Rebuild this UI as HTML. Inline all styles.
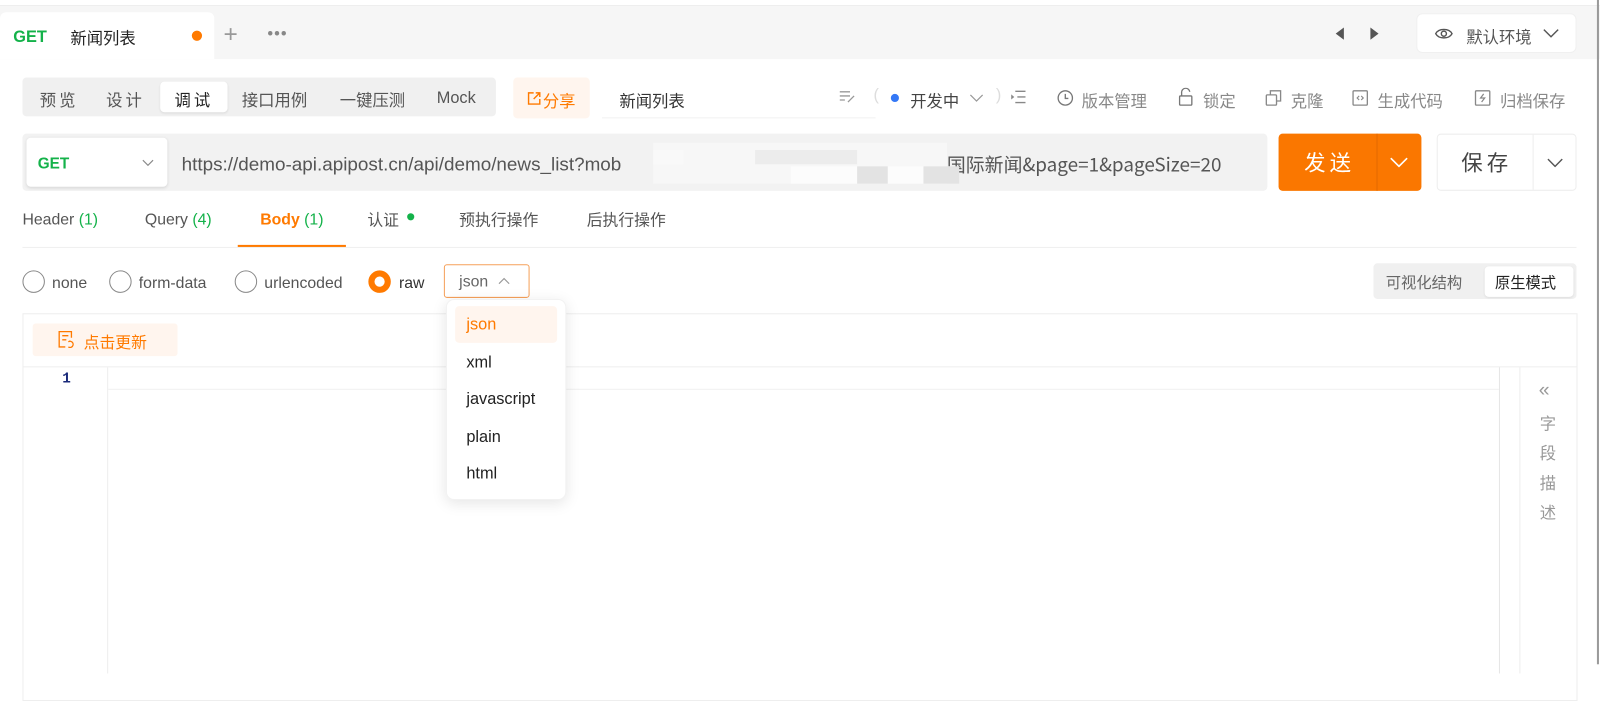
<!DOCTYPE html>
<html><head><meta charset="utf-8">
<style>
*{box-sizing:border-box;margin:0;padding:0}
html,body{width:1600px;height:664px;overflow:hidden;background:#fff}
body{font-family:"Liberation Sans","Noto Sans CJK SC",sans-serif;}
#w{position:absolute;left:0;top:0;width:1568px;height:651px;transform:scale(1.0204);transform-origin:0 0;color:#555}
.a{position:absolute;white-space:nowrap}
.cn{font-family:"Noto Sans CJK SC","Liberation Sans",sans-serif}
.ic{position:absolute}
</style></head><body>
<div id="w">
<!-- top bar -->
<div class="a" style="left:0;top:5px;width:1568px;height:1px;background:#ececec"></div>
<div class="a" style="left:0;top:6px;width:1568px;height:52px;background:#f6f6f6"></div>
<div class="a" style="left:0;top:12px;width:210px;height:46px;background:#fff;border-radius:6px 6px 0 0"></div>
<div class="a" style="left:13px;top:28px;font-size:16px;font-weight:bold;color:#14b24a">GET</div>
<div class="a cn" style="left:69px;top:24px;font-size:16px;color:#222">新闻列表</div>
<div class="a" style="left:188px;top:30px;width:10px;height:10px;border-radius:50%;background:#ff7a00"></div>
<div class="a" style="left:219px;top:20px;font-size:24px;color:#999;font-weight:300">+</div>
<div class="a" style="left:262px;top:25px;font-size:16px;color:#888;letter-spacing:1px">•••</div>
<svg class="ic" style="left:1308px;top:27px" width="10" height="12"><path d="M9 0V12L1 6Z" fill="#555"/></svg>
<svg class="ic" style="left:1342px;top:27px" width="10" height="12"><path d="M1 0V12L9 6Z" fill="#555"/></svg>
<div class="a" style="left:1388px;top:13px;width:157px;height:39px;background:#fff;border-radius:6px;border:1px solid #f0f0f0"></div>
<svg class="ic" style="left:1406px;top:26px" width="18" height="14"><path d="M1 7C4 1.5 14 1.5 17 7C14 12.5 4 12.5 1 7Z" fill="none" stroke="#555" stroke-width="1.4"/><circle cx="9" cy="7" r="2.5" fill="none" stroke="#555" stroke-width="1.4"/></svg>
<div class="a cn" style="left:1437px;top:23px;font-size:16px;color:#555">默认环境</div>
<svg class="ic" style="left:1512px;top:28px" width="16" height="10"><path d="M1 1L8 8L15 1" fill="none" stroke="#555" stroke-width="1.4"/></svg>

<!-- row 2 -->
<div class="a" style="left:22px;top:76px;width:464px;height:38px;background:#f0f0f0;border-radius:4px"></div>
<div class="a" style="left:157px;top:80px;width:66px;height:30px;background:#fff;border-radius:4px;box-shadow:0 1px 2px rgba(0,0,0,.08)"></div>
<div class="a cn" style="top:85px;left:39px;font-size:16px;letter-spacing:3px">预览</div>
<div class="a cn" style="top:85px;left:104px;font-size:16px;letter-spacing:3px">设计</div>
<div class="a cn" style="top:85px;left:171px;font-size:16px;letter-spacing:3px;color:#222">调试</div>
<div class="a cn" style="top:85px;left:237px;font-size:16px">接口用例</div>
<div class="a cn" style="top:85px;left:333px;font-size:16px">一键压测</div>
<div class="a" style="top:88px;left:428px;font-size:16px">Mock</div>
<div class="a" style="left:503px;top:76px;width:75px;height:40px;background:#fff5ee;border-radius:4px"></div>
<svg class="ic" style="left:516px;top:89px" width="15" height="15"><path d="M7 2H2V13H13V8M9 2H13V6M13 2L7 8" fill="none" stroke="#ff7a00" stroke-width="1.4"/></svg>
<div class="a cn" style="left:532px;top:86px;font-size:16px;color:#ff7a00">分享</div>
<div class="a cn" style="left:607px;top:86px;font-size:16px;color:#333">新闻列表</div>
<div class="a" style="left:590px;top:115px;width:268px;height:1px;background:#f0f0f0"></div>
<svg class="ic" style="left:822px;top:88px" width="20" height="14"><path d="M1 2H11M1 6H11M1 10H6M9 12L15 6" stroke="#999" stroke-width="1.3" fill="none"/></svg>
<div class="a" style="left:856px;top:85px;font-size:16px;color:#ddd">(</div>
<div class="a" style="left:873px;top:92px;width:8px;height:8px;border-radius:50%;background:#3478f6"></div>
<div class="a cn" style="left:892px;top:86px;font-size:16px;color:#444">开发中</div>
<svg class="ic" style="left:950px;top:92px" width="14" height="8"><path d="M1 1L7 7L13 1" fill="none" stroke="#999" stroke-width="1.2"/></svg>
<div class="a" style="left:976px;top:85px;font-size:16px;color:#ddd">)</div>
<svg class="ic" style="left:990px;top:88px" width="16" height="14"><path d="M5 1.5H15M7 7H15M5 12.5H15" stroke="#888" stroke-width="1.3"/><path d="M1 4.5L4 7L1 9.5Z" fill="#888"/></svg>
<svg class="ic" style="left:1036px;top:88px" width="16" height="16"><circle cx="8" cy="8" r="7" fill="none" stroke="#777" stroke-width="1.3"/><path d="M8 4V8.5H11" fill="none" stroke="#777" stroke-width="1.3"/></svg>
<div class="a cn" style="left:1060px;top:86px;font-size:16px;color:#888">版本管理</div>
<svg class="ic" style="left:1155px;top:86px" width="14" height="18"><path d="M3 8V5A4 4 0 0 1 11 4" fill="none" stroke="#777" stroke-width="1.3"/><rect x="1" y="8" width="12" height="9" rx="1" fill="none" stroke="#777" stroke-width="1.3"/></svg>
<div class="a cn" style="left:1179px;top:86px;font-size:16px;color:#888">锁定</div>
<svg class="ic" style="left:1240px;top:88px" width="16" height="16"><rect x="1" y="5" width="10" height="10" rx="1" fill="none" stroke="#888" stroke-width="1.3"/><path d="M5 5V1H15V11H11" fill="none" stroke="#888" stroke-width="1.3"/></svg>
<div class="a cn" style="left:1265px;top:86px;font-size:16px;color:#888">克隆</div>
<svg class="ic" style="left:1325px;top:88px" width="16" height="16"><rect x="1" y="1" width="14" height="14" rx="1" fill="none" stroke="#888" stroke-width="1.3"/><path d="M7 6L5 8L7 10M9 6L11 8L9 10" fill="none" stroke="#888" stroke-width="1.1"/></svg>
<div class="a cn" style="left:1350px;top:86px;font-size:16px;color:#888">生成代码</div>
<svg class="ic" style="left:1445px;top:88px" width="16" height="16"><rect x="1" y="1" width="14" height="14" rx="1" fill="none" stroke="#888" stroke-width="1.3"/><path d="M9 4L6 8H10L7 12" fill="none" stroke="#888" stroke-width="1.2"/></svg>
<div class="a cn" style="left:1470px;top:86px;font-size:16px;color:#888">归档保存</div>

<!-- URL row -->
<div class="a" style="left:22px;top:131px;width:1220px;height:56px;background:#f2f2f2;border-radius:4px"></div>
<div class="a" style="left:26px;top:135px;width:138px;height:48px;background:#fff;border-radius:4px;box-shadow:0 1px 3px rgba(0,0,0,.12)"></div>
<div class="a" style="left:37px;top:152px;font-size:15px;font-weight:bold;color:#14b24a">GET</div>
<svg class="ic" style="left:139px;top:156px" width="12" height="7"><path d="M1 1L6 6L11 1" fill="none" stroke="#888" stroke-width="1.1"/></svg>
<div class="a" style="left:178px;top:150px;font-size:18.5px;color:#555">https://demo-api.apipost.cn/api/demo/news_list?mob</div>
<div class="a cn" style="left:928px;top:148px;font-size:18.5px;color:#555">国际新闻&amp;page=1&amp;pageSize=20</div>
<div class="a" style="left:640px;top:140px;width:288px;height:40px;background:#f7f7f7"></div>
<div class="a" style="left:640px;top:147px;width:30px;height:14px;background:#f9f9f9"></div>
<div class="a" style="left:740px;top:147px;width:100px;height:14px;background:#ececec"></div>
<div class="a" style="left:775px;top:163px;width:160px;height:17px;background:#fcfcfc"></div>
<div class="a" style="left:840px;top:163px;width:30px;height:17px;background:#e3e3e3"></div>
<div class="a" style="left:905px;top:163px;width:35px;height:17px;background:#e3e3e3"></div>
<div class="a" style="left:1253px;top:131px;width:140px;height:56px;background:#fa7700;border-radius:4px"></div>
<div class="a" style="left:1349px;top:131px;width:1px;height:56px;background:#e46a00"></div>
<div class="a cn" style="left:1278px;top:144px;font-size:21px;color:#fff;letter-spacing:4px">发送</div>
<svg class="ic" style="left:1362px;top:154px" width="18" height="10"><path d="M1 1L9 9L17 1" fill="none" stroke="#fff" stroke-width="1.6"/></svg>
<div class="a" style="left:1408px;top:131px;width:137px;height:56px;background:#fff;border:1px solid #eee;border-radius:4px"></div>
<div class="a" style="left:1502px;top:132px;width:1px;height:54px;background:#eee"></div>
<div class="a cn" style="left:1432px;top:144px;font-size:21px;color:#444;letter-spacing:4px">保存</div>
<svg class="ic" style="left:1516px;top:155px" width="16" height="9"><path d="M1 1L8 8L15 1" fill="none" stroke="#555" stroke-width="1.4"/></svg>

<!-- tabs -->
<div class="a" style="left:22px;top:207px;font-size:15.5px">Header <span style="color:#14b24a">(1)</span></div>
<div class="a" style="left:142px;top:207px;font-size:15.5px">Query <span style="color:#14b24a">(4)</span></div>
<div class="a" style="left:255px;top:207px;font-size:15.5px;color:#ff7a00;font-weight:bold">Body <span style="color:#14b24a;font-weight:normal">(1)</span></div>
<div class="a cn" style="left:360px;top:204px;font-size:15.5px">认证</div>
<div class="a" style="left:399px;top:209px;width:7px;height:7px;border-radius:50%;background:#14b24a"></div>
<div class="a cn" style="left:450px;top:204px;font-size:15.5px">预执行操作</div>
<div class="a cn" style="left:575px;top:204px;font-size:15.5px">后执行操作</div>
<div class="a" style="left:22px;top:242px;width:1523px;height:1px;background:#f0f0f0"></div>
<div class="a" style="left:233px;top:240px;width:106px;height:2px;background:#ff7a00"></div>

<!-- radios -->
<div class="a" style="left:22px;top:265px;width:22px;height:22px;border-radius:50%;border:1.4px solid #888"></div>
<div class="a" style="left:51px;top:269px;font-size:15.5px">none</div>
<div class="a" style="left:107px;top:265px;width:22px;height:22px;border-radius:50%;border:1.4px solid #888"></div>
<div class="a" style="left:136px;top:269px;font-size:15.5px">form-data</div>
<div class="a" style="left:230px;top:265px;width:22px;height:22px;border-radius:50%;border:1.4px solid #888"></div>
<div class="a" style="left:259px;top:269px;font-size:15.5px">urlencoded</div>
<div class="a" style="left:361px;top:265px;width:22px;height:22px;border-radius:50%;border:6px solid #ff7a00"></div>
<div class="a" style="left:391px;top:269px;font-size:15.5px;color:#333">raw</div>
<div class="a" style="left:435px;top:259px;width:84px;height:33px;border:1px solid #f5a05a;border-radius:3px"></div>
<div class="a" style="left:450px;top:268px;font-size:15.5px;color:#666">json</div>
<svg class="ic" style="left:488px;top:272px" width="12" height="7"><path d="M1 6L6 1L11 6" fill="none" stroke="#999" stroke-width="1.1"/></svg>
<div class="a" style="left:1346px;top:258px;width:199px;height:35px;background:#f0f0f0;border-radius:4px"></div>
<div class="a" style="left:1455px;top:261px;width:87px;height:30px;background:#fff;border-radius:4px;box-shadow:0 1px 2px rgba(0,0,0,.08)"></div>
<div class="a cn" style="left:1358px;top:266px;font-size:15px;color:#666">可视化结构</div>
<div class="a cn" style="left:1465px;top:266px;font-size:15px;color:#222">原生模式</div>

<!-- editor -->
<div class="a" style="left:22px;top:307px;width:1524px;height:380px;border:1px solid #eee"></div>
<div class="a" style="left:32px;top:317px;width:142px;height:32px;background:#fff5ee;border-radius:3px"></div>
<svg class="ic" style="left:57px;top:324px" width="17" height="17"><path d="M13 7V1H1V16H7" fill="none" stroke="#ff7a00" stroke-width="1.3"/><path d="M4 5H10M4 9H8M10 11A3 3 0 1 1 10 16M10 11L12 10" fill="none" stroke="#ff7a00" stroke-width="1.3"/></svg>
<div class="a cn" style="left:82px;top:324px;font-size:15.5px;color:#ff7a00">点击更新</div>
<div class="a" style="left:22px;top:359px;width:1524px;height:1px;background:#eee"></div>
<div class="a" style="left:105px;top:360px;width:1px;height:300px;background:#eee"></div>
<div class="a" style="left:106px;top:381px;width:1363px;height:1px;background:#f0f0f0"></div>
<div class="a" style="left:61px;top:364px;font-size:14px;color:#1a2a7a;font-family:'Liberation Mono',monospace;font-weight:bold">1</div>
<div class="a" style="left:1469px;top:360px;width:1px;height:300px;background:#e6e6e6"></div>
<div class="a" style="left:1489px;top:360px;width:1px;height:300px;background:#eee"></div>
<div class="a" style="left:1508px;top:372px;font-size:19px;color:#999">«</div>
<div class="a cn" style="left:1509px;top:400px;font-size:16px;color:#999;line-height:29px;white-space:normal;width:18px">字段描述</div>
<div class="a" style="left:1565px;top:0;width:2px;height:651px;background:#9a9a9a"></div>

<!-- dropdown -->
<div class="a" style="left:437px;top:293px;width:118px;height:197px;background:#fff;border-radius:8px;box-shadow:0 3px 14px rgba(0,0,0,.1);border:1px solid #f2f2f2"></div>
<div class="a" style="left:446px;top:300px;width:100px;height:36px;background:#fff5ee;border-radius:4px"></div>
<div class="a" style="left:457px;top:310px;font-size:16px;color:#ff7a00">json</div>
<div class="a" style="left:457px;top:347px;font-size:16px;color:#222">xml</div>
<div class="a" style="left:457px;top:383px;font-size:16px;color:#222">javascript</div>
<div class="a" style="left:457px;top:420px;font-size:16px;color:#222">plain</div>
<div class="a" style="left:457px;top:456px;font-size:16px;color:#222">html</div>
</div>
</body></html>
